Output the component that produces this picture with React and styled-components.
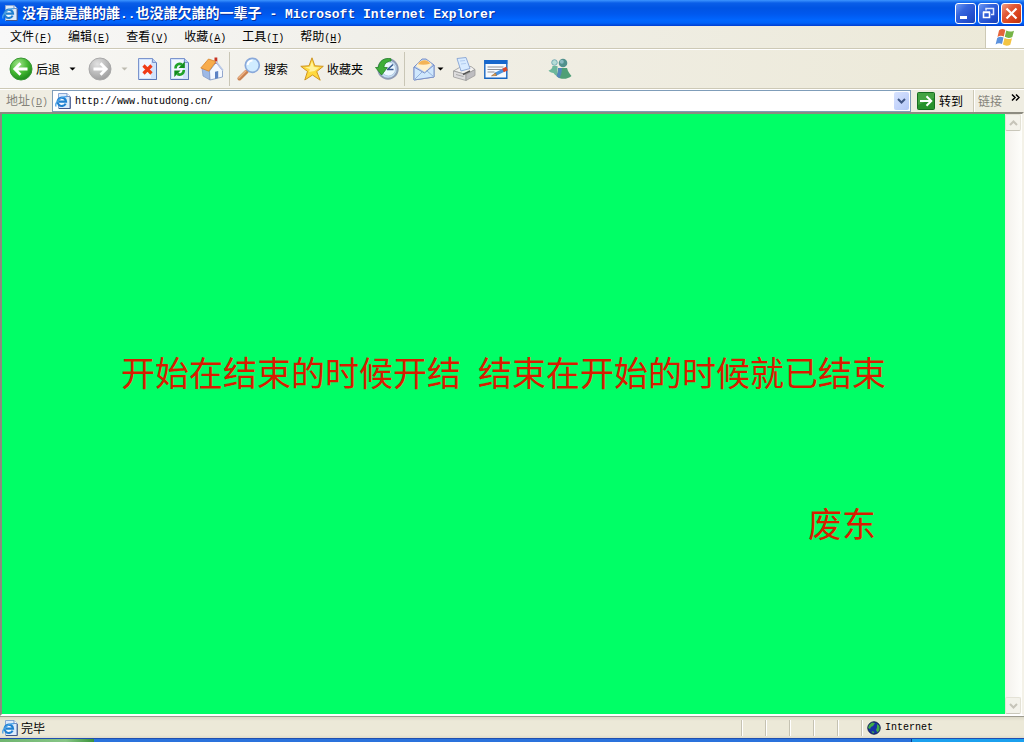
import React from "react";
import styled, { createGlobalStyle } from "styled-components";

const GlobalStyle = createGlobalStyle`
  * { box-sizing: border-box; }
  html, body { margin: 0; padding: 0; }
  body {
    font-family: "Noto Sans CJK SC", "Liberation Sans", sans-serif;
    font-size: 12px;
    line-height: 16px;
    color: #000;
  }
  button, input { font: inherit; color: inherit; }
`;

const Window = styled.div`
  display: flex;
  flex-direction: column;
  min-height: 100vh;
  background: #ece9d8;
`;

const TitleBar = styled.header`
  display: flex;
  align-items: center;
  height: 26px;
  padding: 0 2px;
  background: linear-gradient(#3d95ff 0, #0a5ee8 3px, #0054e3 8px, #0058ee 14px, #0066ff 20px, #0062f8 23px, #003dd0 26px);
`;

const Title = styled.h1`
  flex: 1;
  min-width: 0;
  margin: 0 0 0 4px;
  font-size: 14px;
  line-height: 20px;
  font-weight: 700;
  color: #fff;
  text-shadow: 1px 1px 0 #0a2f9a;
  white-space: pre;
  overflow: hidden;
`;

const Latin = styled.span`
  font-family: "Liberation Mono", monospace;
  font-size: ${(p) => (p.$title ? "13px" : "10px")};
`;

const CaptionButtons = styled.div`
  display: flex;
  gap: 2px;
`;

const CaptionButton = styled.button`
  display: flex;
  width: 21px;
  height: 21px;
  padding: 0;
  border: 1px solid #fff;
  border-radius: 3px;
  background: ${(p) =>
    p.$close
      ? "linear-gradient(135deg, #f0a088 0, #e25a38 35%, #d8401a 70%, #b83410 100%)"
      : "linear-gradient(135deg, #6f9af5 0, #3565dd 35%, #2450cf 70%, #1a44b8 100%)"};
`;

const MenuBar = styled.nav`
  display: flex;
  align-items: stretch;
  height: 23px;
  padding-left: 2px;
  background: linear-gradient(90deg, #f8f8f8 0, #f1f0ea 35%, #ece9d8 100%);
  border-bottom: 1px solid #cdc9b6;
`;

const MenuItem = styled.button`
  padding: 0 8px;
  border: 0;
  background: none;
  white-space: nowrap;
`;

const HotKey = styled(Latin)`
  & u { text-underline-offset: 1px; }
`;

const FlagBox = styled.div`
  display: flex;
  align-items: center;
  justify-content: center;
  width: 39px;
  margin-left: auto;
  background: #fff;
  border-left: 1px solid #cdc9b6;
`;

const ToolBar = styled.div`
  display: flex;
  align-items: center;
  height: 40px;
  padding-left: 5px;
  border-top: 1px solid #fff;
  border-bottom: 1px solid #cdc9b6;
  background: linear-gradient(90deg, #f8f8f6 0, #f1efe7 35%, #ece9d8 100%);
`;

const ToolButton = styled.button`
  display: flex;
  align-items: center;
  gap: 3px;
  height: 32px;
  padding: 0 ${(p) => (p.$tight ? "0" : "4px")} 0 4px;
  margin: 0 ${(p) => (p.$labelled ? "4px" : "0")} 0 ${(p) => p.$before || 0}px;
  border: 0;
  background: none;
  white-space: nowrap;
`;

const DropButton = styled.button`
  display: flex;
  align-items: center;
  justify-content: center;
  width: ${(p) => (p.$narrow ? "8px" : "16px")};
  height: 32px;
  margin-right: ${(p) => p.$after || 0}px;
  padding: 0;
  border: 0;
  background: none;
`;

const Divider = styled.span`
  width: 1px;
  height: 34px;
  margin: 0 3px 0 1px;
  background: #c9c6b6;
`;

const AddressBar = styled.form`
  display: flex;
  align-items: center;
  height: 23px;
  padding-left: 6px;
  border-top: 1px solid #fff;
  background: #efede2;
`;

const AddressLabel = styled.label`
  width: 46px;
  color: #85837a;
  white-space: nowrap;
`;

const AddressField = styled.div`
  flex: 1;
  display: flex;
  align-items: center;
  min-width: 0;
  height: 22px;
  padding: 0 1px 0 2px;
  border: 1px solid #7f9db9;
  background: #fff;
`;

const AddressInput = styled.input`
  flex: 1;
  min-width: 0;
  height: 18px;
  padding: 0 0 0 4px;
  border: 0;
  outline: 0;
  background: none;
  font-family: "Liberation Mono", monospace;
  font-size: 10px;
`;

const ListButton = styled.button`
  display: flex;
  align-items: center;
  justify-content: center;
  width: 15px;
  height: 18px;
  padding: 0;
  border: 0;
  border-radius: 2px;
  background: linear-gradient(135deg, #d8e3ff, #b3c7f8);
`;

const GoButton = styled.button`
  display: flex;
  align-items: center;
  gap: 4px;
  padding: 0 10px 0 6px;
  border: 0;
  background: none;
  white-space: nowrap;
`;

const Links = styled.div`
  display: flex;
  align-items: center;
  height: 22px;
  padding: 0 4px;
  gap: 9px;
  border-left: 1px solid #cdc9b6;
  box-shadow: inset 1px 0 0 #fff;
  color: #85837a;
  white-space: nowrap;
`;

const More = styled.button`
  display: flex;
  padding: 0 0 8px;
  border: 0;
  background: none;
`;

const Viewport = styled.div`
  flex: 1;
  display: flex;
  border: 2px solid;
  border-color: #8d8b80 #f4f2e8 #fff #8d8b80;
  background: #fff;
`;

const Page = styled.main`
  flex: 1;
  display: flex;
  justify-content: center;
  align-items: flex-start;
  padding: 233px 16px 0;
  background: #00ff66;
`;

const Poem = styled.div`
  display: flex;
  flex-direction: column;
  gap: 101px;
  font-size: 34px;
  line-height: 50px;
  color: #d81c00;
`;

const Verse = styled.p`
  display: flex;
  gap: 17px;
  margin: 0;
`;

const Signature = styled.p`
  margin: 0;
  padding-right: 10px;
  text-align: right;
`;

const ScrollBar = styled.div`
  display: flex;
  flex-direction: column;
  justify-content: space-between;
  width: 17px;
  background: linear-gradient(90deg, #f3f1ec, #fefefb);
`;

const ScrollButton = styled.button`
  display: flex;
  align-items: center;
  justify-content: center;
  width: 16px;
  height: 17px;
  padding: 0;
  border: 1px solid #e4e2d6;
  border-bottom-color: #c9c7ba;
  border-radius: 2px;
  background: #f3f2ea;
`;

const StatusBar = styled.footer`
  display: flex;
  align-items: center;
  height: 22px;
  padding: 0 2px;
  border-top: 1px solid #9d9b8e;
  background: linear-gradient(#dcd9c8, #ece9d8 4px, #ece9d8 18px, #dedbc9);
`;

const StatusText = styled.div`
  flex: 1;
  display: flex;
  align-items: center;
  gap: 3px;
`;

const StatusCell = styled.div`
  display: flex;
  align-items: center;
  gap: 4px;
  width: ${(p) => (p.$zone ? "161px" : "24px")};
  height: 16px;
  padding-left: 5px;
  border-left: 1px solid #c5c2b2;
  box-shadow: inset 1px 0 0 #fff;
`;

const TaskStrip = styled.div`
  display: flex;
  height: 4px;
  border-top: 1px solid #1f4fb0;
  background: #2a72dc;
`;

const StartEdge = styled.div`
  width: 94px;
  background: linear-gradient(90deg, #6fb56f, #86c586 70%, #3a933a);
`;

const TrayEdge = styled.div`
  width: 113px;
  margin-left: auto;
  border-left: 1px solid #0b3f8c;
  background: #1ba0ee;
`;

const PageIcon = () => (
  <svg width="16" height="16" viewBox="0 0 16 16" aria-hidden="true">
    <path d="M3.500 .5h8.500l3 3v12h-11.500z" fill="#dcebfb" stroke="#8aa6d4" />
    <path d="M12 .5v3h3" fill="#fff" stroke="#6f8fc4" />
    <path d="M15.300 4v11.500H4" fill="none" stroke="#44568a" />
    <circle cx="6.800" cy="8.600" r="4.200" fill="#f2f9ff" />
    <path d="M10.600 10.600A4.200 4.200 0 1 1 11 8.600H4" fill="none" stroke="#1f7fd0" strokeWidth="2.200" />
    <path d="M1.200 13.500C-.8 10.500 5.500 3 12 3.600" fill="none" stroke="#4aa0e6" strokeWidth="1.300" />
  </svg>
);

const CaretDown = ({ color = "#000" }) => (
  <svg width="7" height="4" viewBox="0 0 7 4" aria-hidden="true">
    <path d="M.5 .5h6L3.5 3.5z" fill={color} />
  </svg>
);

const RoundArrow = ({ forward }) => (
  <svg width="24" height="24" viewBox="0 0 24 24" aria-hidden="true">
    <defs>
      <radialGradient id={forward ? "fwd" : "bck"} cx=".38" cy=".28" r=".8">
        <stop offset="0" stopColor={forward ? "#e2e2e2" : "#a2e58b"} />
        <stop offset=".55" stopColor={forward ? "#b9b9b9" : "#41b52f"} />
        <stop offset="1" stopColor={forward ? "#989898" : "#16811a"} />
      </radialGradient>
    </defs>
    <circle cx="12" cy="12" r="11" fill={`url(#${forward ? "fwd" : "bck"})`} stroke={forward ? "#a9a9a9" : "#3a9635"} />
    <path
      d={forward ? "M5.5 12H18M12.5 6.3l5.7 5.7-5.7 5.7" : "M18.5 12H6M11.5 6.3L5.8 12l5.7 5.7"}
      fill="none"
      stroke="#fff"
      strokeWidth="2.8"
    />
  </svg>
);

const Sheet = () => (
  <>
    <path d="M2.5 1.5h14l4 4v17h-18z" fill="#d3e3fb" stroke="#7c95cd" />
    <path d="M4 3h11v18H4z" fill="#f1f6ff" />
    <path d="M16.5 1.5v4h4" fill="#b9cdf2" stroke="#7c95cd" />
    <path d="M20.5 6v16.5H3" fill="none" stroke="#5c78b8" />
  </>
);

const StopIcon = () => (
  <svg width="24" height="24" viewBox="0 0 24 24" aria-hidden="true">
    <Sheet />
    <path d="M7.500 8.500l8 8M15.500 8.500l-8 8" stroke="#f03a17" strokeWidth="3.200" />
  </svg>
);

const RefreshIcon = () => (
  <svg width="24" height="24" viewBox="0 0 24 24" aria-hidden="true">
    <Sheet />
    <path d="M7.500 11.500C7.500 7.500 11 6 14 7.500" fill="none" stroke="#21a32a" strokeWidth="2.600" />
    <path d="M16.800 4.500v6.500h-6.300z" fill="#128c1c" />
    <path d="M15.800 13c0 4-3.500 5.500-6.500 4" fill="none" stroke="#21a32a" strokeWidth="2.600" />
    <path d="M6.300 20v-6.500h6.300z" fill="#128c1c" />
  </svg>
);

const HomeIcon = () => (
  <svg width="24" height="24" viewBox="0 0 24 24" aria-hidden="true">
    <path d="M2 11l8 3v9l-7-4z" fill="#9db9e6" stroke="#7b93c3" strokeWidth=".7" />
    <path d="M9.500 14L16 5.500l6.500 8V20L10 23z" fill="#f4f8ff" stroke="#7b93c3" strokeWidth=".8" />
    <path d="M14.500 .5h2.800v6h-2.800z" fill="#c63322" />
    <path d="M.8 11L8.500 2 16 4.500 8.800 14.200z" fill="#f7ac4c" stroke="#d5832b" strokeWidth=".8" />
    <path d="M16 4.500L23 13.500" stroke="#b9c9e6" strokeWidth="1.600" />
    <path d="M15 14.800l3.200-.7v7l-3.200.8z" fill="#5d82c4" />
  </svg>
);

const SearchIcon = () => (
  <svg width="24" height="24" viewBox="0 0 24 24" aria-hidden="true">
    <path d="M9.6 14.5L2.500 21.500" stroke="#c98250" strokeWidth="4" strokeLinecap="round" />
    <path d="M8.8 14L1.8 21" stroke="#eeb487" strokeWidth="1.5" strokeLinecap="round" />
    <circle cx="15.3" cy="8.3" r="7" fill="#d0ecff" stroke="#8aa9da" strokeWidth="1.7" />
    <path d="M10.7 8a4.8 4.8 0 0 1 4.8-4.6" fill="none" stroke="#fff" strokeWidth="2" />
  </svg>
);

const StarIcon = () => (
  <svg width="24" height="24" viewBox="0 0 24 24" aria-hidden="true">
    <path d="M12 .8l2.8 8 8.5.5-6.6 5.3 3.5 8.6-7.700-5.200-7.700 5 2.700-8.600L.8 9.300l8.200-.5z" fill="#ffd93e" stroke="#cf9422" strokeLinejoin="round" />
    <path d="M12 4l1.8 6 5.5.5-4.800 3.600L9 15l.8-2.800L5 10.300l5-.5z" fill="#fff39b" />
  </svg>
);

const HistoryIcon = () => (
  <svg width="24" height="24" viewBox="0 0 24 24" aria-hidden="true">
    <circle cx="13" cy="12" r="9.700" fill="#c6dff4" stroke="#8e9bb5" strokeWidth="2" />
    <circle cx="13.500" cy="12" r="7" fill="#edf8ff" stroke="#a9c0dc" strokeWidth=".8" />
    <path d="M12.500 12.500l5.500-5M12 12.500h6.500" stroke="#375b90" strokeWidth="1.600" />
    <path d="M16 1.800C9 .3 3.700 4.500 3.400 10.500H.5l6.200 7.500 5.600-7.500H9C9 7 11.500 4.500 16 4z" fill="#3fae39" stroke="#248226" strokeWidth=".8" />
  </svg>
);

const MailIcon = () => (
  <svg width="24" height="24" viewBox="0 0 24 24" aria-hidden="true">
    <path d="M2 10L10 2h4l8 6v12L2 23z" fill="#b2cff5" stroke="#7d92c8" />
    <path d="M4 9.5C7 1.5 17 1.5 20 8l-7 7z" fill="#fff1cf" />
    <path d="M6 7.3C9 1.8 16 2 18 6.8 14 8 10 8 6 7.3z" fill="#f4b456" />
    <path d="M2 10l10.5 6L22 8v12L2 23z" fill="#cfe7fd" stroke="#7d92c8" />
    <path d="M2 23l8-8M22 20l-7.5-6.5" stroke="#94b2dd" />
  </svg>
);

const PrinterIcon = () => (
  <svg width="24" height="24" viewBox="0 0 24 24" aria-hidden="true">
    <path d="M1.500 14l6-3.500L19 9.500l4 3-9 5z" fill="#f2f1ef" stroke="#999" strokeWidth=".8" />
    <path d="M5 1.500l9-1 4 11-9 2.500z" fill="#d8ebff" stroke="#86a3d3" strokeWidth=".9" />
    <path d="M8 4l5-.5M9 7l5-.6" stroke="#b3cdf0" />
    <path d="M1.5 14L14 17.5V23.500L1.500 20z" fill="#dddcdd" stroke="#9a9a9a" strokeWidth=".8" />
    <path d="M14 17.5l9-5V18.500l-9 5z" fill="#bebdc0" stroke="#9a9a9a" strokeWidth=".8" />
    <path d="M11 17.500l7-3.500" stroke="#555" strokeWidth="1.500" />
    <path d="M4 17.500l7.500 2" stroke="#aaa" />
  </svg>
);

const EditIcon = () => (
  <svg width="24" height="24" viewBox="0 0 24 24" aria-hidden="true">
    <path d="M.8 3.8h22v17.4H.8z" fill="#f6faff" stroke="#1765c2" strokeWidth="1.4" />
    <path d="M.5 3h22.8v4H.5z" fill="#1667cd" />
    <path d="M3.5 10h16M3.5 12.5h16M3.5 15h7" stroke="#8f9299" />
    <path d="M11 17.5L20 13" stroke="#4b93e0" strokeWidth="3.4" />
    <path d="M19 13.5l4-2" stroke="#d9482b" strokeWidth="3.8" />
    <path d="M11.5 16l-4 2.8 5-.3z" fill="#eaa44f" stroke="#865423" strokeWidth=".5" />
  </svg>
);

const MessengerIcon = () => (
  <svg width="24" height="24" viewBox="0 0 24 24" aria-hidden="true">
    <path d="M.5 13.500c2-.5 4-2 4-4.500h5v10c-2-.5-3-1.500-4-3-2 0-4-1-5-2.500z" fill="#6db79c" />
    <circle cx="6.500" cy="5.500" r="2.800" fill="#b5dcd6" stroke="#639eab" strokeWidth=".8" />
    <path d="M10 11h9c1 4 3 6 4.500 8-4 3.500-11 4-15 0 1-2 1.800-5 1.500-8z" fill="#4f9f76" />
    <path d="M10 11h4c0 4-1 7-2.500 10.300-1.200-.5-2.200-1.300-3-2.300 1-2 1.800-5 1.500-8z" fill="#5386bb" />
    <circle cx="15" cy="6" r="4.300" fill="#52918d" />
    <circle cx="13.800" cy="4.800" r="2" fill="#8abac2" />
  </svg>
);

const GoIcon = () => (
  <svg width="18" height="18" viewBox="0 0 18 18" aria-hidden="true">
    <rect x=".5" y=".5" width="17" height="17" rx="1" fill="#27912c" stroke="#176d20" />
    <path d="M1 1h16v5L1 13z" fill="#56af52" opacity=".6" />
    <path d="M3 9h11M9.5 4.2L14.3 9l-4.8 4.8" fill="none" stroke="#fff" strokeWidth="2" />
  </svg>
);

const FlagIcon = () => (
  <svg width="20" height="19" viewBox="0 0 20 19" aria-hidden="true">
    <path d="M4 2.5C6 .7 8 .7 10.3 2L8.8 8.5C6.500 7.300 4.500 7.500 2.500 9z" fill="#e5643b" />
    <path d="M11.300 2.500c2.500 1.500 5 1.300 7.700.2L17.300 9c-2.700 1.300-5 1.200-7.500-.2z" fill="#76b447" />
    <path d="M2.200 10C4.300 8.400 6.300 8.500 8.500 9.600L7 16C4.800 14.700 2.700 15 .6 16.400z" fill="#5a91dd" />
    <path d="M9.500 10.100c2.500 1.300 5 1.200 7.500.1l-1.700 6.500c-2.500 1.300-5 1.200-7.400-.1z" fill="#f3c443" />
  </svg>
);

const GlobeIcon = () => (
  <svg width="14" height="14" viewBox="0 0 14 14" aria-hidden="true">
    <circle cx="7" cy="7" r="6.200" fill="#1532a4" stroke="#0b1748" />
    <path d="M2 4L5 1.500 8 2 6 5 4 6 3 8 1 7z" fill="#41ad49" />
    <path d="M10 3l2.500 2v4l-2 2.500L9 9l1-2.500zM4.500 10l3 1-1.500 1.800z" fill="#41ad49" />
  </svg>
);

const Chevron = ({ up, color }) => (
  <svg width="9" height="6" viewBox="0 0 9 6" aria-hidden="true">
    <path d={up ? "M1 5l3.500-3.500L8 5" : "M1 1l3.500 3.500L8 1"} fill="none" stroke={color} strokeWidth="2" />
  </svg>
);

const menus = [
  ["文件", "F"],
  ["编辑", "E"],
  ["查看", "V"],
  ["收藏", "A"],
  ["工具", "T"],
  ["帮助", "H"],
];

export default function App() {
  return (
    <Window>
      <GlobalStyle />
      <TitleBar>
        <PageIcon />
        <Title>
          没有誰是誰的誰<Latin $title>..</Latin>也没誰欠誰的一辈子
          <Latin $title>{" - Microsoft Internet Explorer"}</Latin>
        </Title>
        <CaptionButtons>
          <CaptionButton aria-label="最小化">
            <svg width="19" height="19" viewBox="0 0 19 19"><path d="M4 12h7v3H4z" fill="#fff" /></svg>
          </CaptionButton>
          <CaptionButton aria-label="还原">
            <svg width="19" height="19" viewBox="0 0 19 19">
              <path d="M7 6.500V4.500h7.500v6H12M7 4.500h7.500" fill="none" stroke="#dfe8ff" strokeWidth="1.500" />
              <path d="M4.500 8.500h6v5h-6zM4 8h7" fill="none" stroke="#fff" strokeWidth="1.600" />
            </svg>
          </CaptionButton>
          <CaptionButton $close aria-label="关闭">
            <svg width="19" height="19" viewBox="0 0 19 19"><path d="M4.500 4.500l10 10M14.500 4.500l-10 10" stroke="#fff" strokeWidth="2.200" /></svg>
          </CaptionButton>
        </CaptionButtons>
      </TitleBar>

      <MenuBar>
        {menus.map(([name, key]) => (
          <MenuItem key={key}>
            {name}
            <HotKey>(<u>{key}</u>)</HotKey>
          </MenuItem>
        ))}
        <FlagBox><FlagIcon /></FlagBox>
      </MenuBar>

      <ToolBar>
        <ToolButton><RoundArrow />后退</ToolButton>
        <DropButton aria-label="后退列表" $after={4}><CaretDown /></DropButton>
        <ToolButton aria-label="前进"><RoundArrow forward /></ToolButton>
        <DropButton aria-label="前进列表"><CaretDown color="#bdbbb0" /></DropButton>
        <ToolButton aria-label="停止"><StopIcon /></ToolButton>
        <ToolButton aria-label="刷新"><RefreshIcon /></ToolButton>
        <ToolButton aria-label="主页"><HomeIcon /></ToolButton>
        <Divider />
        <ToolButton $labelled><SearchIcon />搜索</ToolButton>
        <ToolButton $labelled><StarIcon />收藏夹</ToolButton>
        <ToolButton aria-label="历史"><HistoryIcon /></ToolButton>
        <Divider />
        <ToolButton $tight aria-label="邮件"><MailIcon /></ToolButton>
        <DropButton $narrow $after={4} aria-label="邮件列表"><CaretDown /></DropButton>
        <ToolButton aria-label="打印"><PrinterIcon /></ToolButton>
        <ToolButton aria-label="编辑"><EditIcon /></ToolButton>
        <ToolButton $before={32} aria-label="Messenger"><MessengerIcon /></ToolButton>
      </ToolBar>

      <AddressBar onSubmit={(e) => e.preventDefault()}>
        <AddressLabel htmlFor="address">
          地址<HotKey>(<u>D</u>)</HotKey>
        </AddressLabel>
        <AddressField>
          <PageIcon />
          <AddressInput id="address" type="text" defaultValue="http://www.hutudong.cn/" />
          <ListButton type="button" aria-label="地址列表"><Chevron color="#3f5684" /></ListButton>
        </AddressField>
        <GoButton type="submit"><GoIcon />转到</GoButton>
        <Links>
          链接
          <More type="button" aria-label="更多链接">
            <svg width="9" height="7" viewBox="0 0 9 7"><path d="M1 .5l3 3-3 3M5 .5l3 3-3 3" fill="none" stroke="#000" strokeWidth="1.500" /></svg>
          </More>
        </Links>
      </AddressBar>

      <Viewport>
        <Page>
          <Poem>
            <Verse>
              <span>开始在结束的时候开结</span>
              <span>结束在开始的时候就已结束</span>
            </Verse>
            <Signature>废东</Signature>
          </Poem>
        </Page>
        <ScrollBar>
          <ScrollButton aria-label="向上滚动"><Chevron up color="#c6c4b9" /></ScrollButton>
          <ScrollButton aria-label="向下滚动"><Chevron color="#c6c4b9" /></ScrollButton>
        </ScrollBar>
      </Viewport>

      <StatusBar>
        <StatusText><PageIcon />完毕</StatusText>
        <StatusCell />
        <StatusCell />
        <StatusCell />
        <StatusCell />
        <StatusCell />
        <StatusCell $zone><GlobeIcon /><Latin>Internet</Latin></StatusCell>
      </StatusBar>
      <TaskStrip>
        <StartEdge />
        <TrayEdge />
      </TaskStrip>
    </Window>
  );
}
